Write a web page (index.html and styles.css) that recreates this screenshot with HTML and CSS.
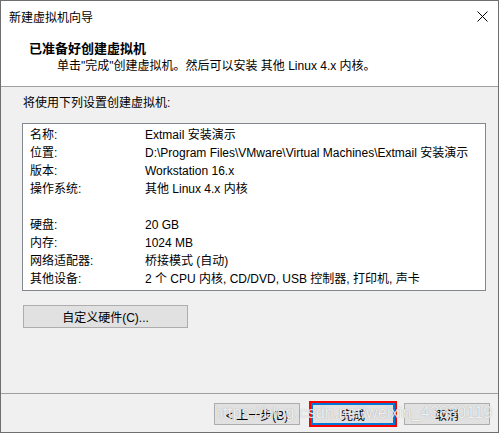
FILE: index.html
```html
<!DOCTYPE html>
<html lang="zh-CN">

<head>
    <meta charset="UTF-8">
    <title>新建虚拟机向导</title>
    <link rel="stylesheet" href="styles.css">
</head>

<body>
    <div class="window">
        <!-- 标题栏 -->
        <div class="titlebar">
            <span class="title">新建虚拟机向导</span>
            <svg class="close" width="11" height="11" viewBox="0 0 11 11">
                <path d="M0.5 0.5 L10.5 10.5 M10.5 0.5 L0.5 10.5" stroke="#000" stroke-width="1" fill="none" />
            </svg>
        </div>

        <!-- 顶部说明 -->
        <div class="header">
            <h1>已准备好创建虚拟机</h1>
            <p>单击"完成"创建虚拟机。然后可以安装 其他 Linux 4.x 内核。</p>
        </div>

        <!-- 设置列表 -->
        <div class="main">
            <p class="intro">将使用下列设置创建虚拟机:</p>
            <div class="listbox">
                <div class="row"><span class="label">名称:</span><span>Extmail 安装演示</span></div>
                <div class="row"><span class="label">位置:</span><span>D:\Program Files\VMware\Virtual Machines\Extmail 安装演示</span></div>
                <div class="row"><span class="label">版本:</span><span>Workstation 16.x</span></div>
                <div class="row"><span class="label">操作系统:</span><span>其他 Linux 4.x 内核</span></div>
                <div class="row"></div>
                <div class="row"><span class="label">硬盘:</span><span>20 GB</span></div>
                <div class="row"><span class="label">内存:</span><span>1024 MB</span></div>
                <div class="row"><span class="label">网络适配器:</span><span>桥接模式 (自动)</span></div>
                <div class="row"><span class="label">其他设备:</span><span>2 个 CPU 内核, CD/DVD, USB 控制器, 打印机, 声卡</span></div>
            </div>
            <button class="btn btn-wide">自定义硬件(C)...</button>
        </div>

        <!-- 底部按钮 -->
        <div class="footer">
            <button class="btn">&lt; 上一步(B)</button>
            <button class="btn btn-default">完成</button>
            <button class="btn">取消</button>
            <span class="watermark">https://blog.csdn.net/weixin_43830119</span>
        </div>
    </div>
</body>

</html>
```

FILE: styles.css
```css
body {
    margin: 0;
    padding: 0;
    font-family: "Liberation Sans", "Noto Sans CJK SC", sans-serif;
    font-size: 12px;
    color: #000;
    background-color: #fff;
}

.window {
    width: 499px;
    height: 433px;
    box-sizing: border-box;
    border: 1px solid #6f6f6f;
    display: flex;
    flex-direction: column;
    background-color: #f0f0f0;
}

.titlebar {
    height: 30px;
    background-color: #fff;
    display: flex;
    align-items: center;
    justify-content: space-between;
    padding: 0 10px 0 8px;
}

.close {
    margin-top: 1px;
}

.header {
    background-color: #fff;
    height: 55px;
    border-bottom: 1px solid #a0a0a0;
    padding-left: 28px;
}

.header h1 {
    margin: 10px 0 0 0;
    font-size: 13px;
    line-height: 16px;
    font-weight: bold;
}

.header p {
    margin: 1px 0 0 28px;
    line-height: 16px;
}

.main {
    flex: 1;
    padding: 0 12px 0 21px;
}

.intro {
    margin: 8px 0 0 1px;
    line-height: 17px;
}

.listbox {
    margin-top: 11px;
    background-color: #fff;
    border: 1px solid #828790;
    padding: 2px 0;
    height: 162px;
}

.row {
    display: flex;
    height: 18px;
    line-height: 18px;
    padding-left: 7px;
}

.row .label {
    width: 115px;
}

.btn {
    font-family: "Liberation Sans", "Noto Sans CJK SC", sans-serif;
    font-size: 12px;
    color: #000;
    background-color: #e1e1e1;
    border: 1px solid #adadad;
    width: 86px;
    height: 22px;
    padding: 0;
}

.btn-wide {
    display: block;
    margin: 14px 0 0 1px;
    width: 165px;
    height: 23px;
}

.footer {
    position: relative;
    height: 39px;
    border-top: 1px solid #a0a0a0;
    display: flex;
    justify-content: flex-end;
    align-items: flex-start;
    padding: 9px 8px 0 0;
    box-sizing: border-box;
    gap: 9px;
}

.btn-default {
    width: 84px;
    border: 2px solid #0078d7;
    outline: 2px solid #ff0000;
    outline-offset: 0;
    margin-left: 2px;
}

/* 图片水印 */
.watermark {
    position: absolute;
    left: 213px;
    top: 10px;
    font-family: "Liberation Sans", sans-serif;
    font-size: 16px;
    letter-spacing: 0.2px;
    white-space: nowrap;
    color: rgba(255, 255, 255, 0.85);
    text-shadow: 0 0 1px rgba(0, 0, 0, 0.35);
    pointer-events: none;
}
```
